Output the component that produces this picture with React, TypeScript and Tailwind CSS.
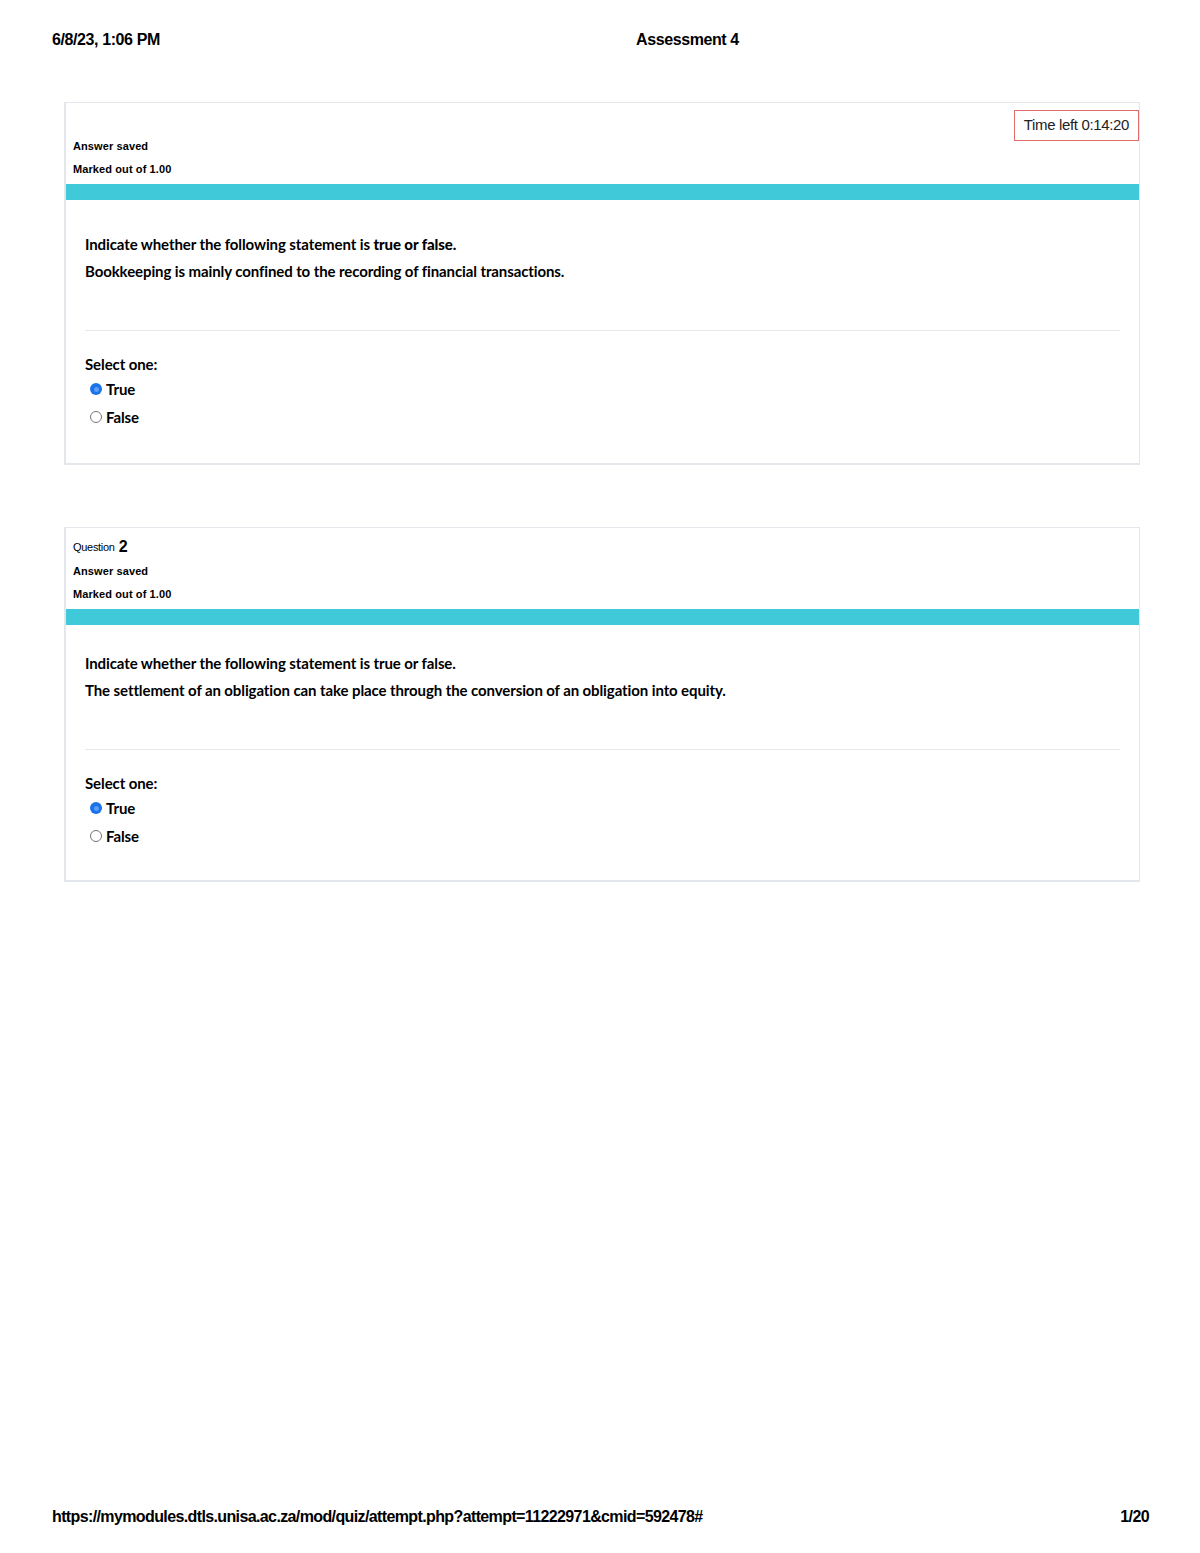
import React from 'react';

interface QuestionCardProps {
    number?: number;
    statement: string;
    boldTail?: boolean;
    firstPad?: string;
    bottomPad?: string;
}

const RadioOption: React.FC<{ label: string; checked: boolean }> = ({ label, checked }) => (
    <label className="flex items-center h-[28px] pl-[5px]">
        {checked ? (
            <span className="w-[12px] h-[12px] rounded-full bg-[#1a73e8] flex items-center justify-center">
                <span className="w-[5px] h-[5px] rounded-full bg-[#5b9cf5]"></span>
            </span>
        ) : (
            <span className="w-[12px] h-[12px] rounded-full border border-[#767676] bg-white"></span>
        )}
        <span className="ml-[4px] font-bold">{label}</span>
    </label>
);

const QuestionCard: React.FC<QuestionCardProps> = ({ number, statement, boldTail, firstPad, bottomPad }) => (
    <div className="relative bg-white border border-[#e3e6ea] border-l-2 border-b-2 text-[#1d2125]">
        <div className="pt-[7px] px-[7px] font-['Liberation_Sans',Arial,sans-serif] font-bold text-[11px] tracking-[0.1px] text-black">
            <div className="h-[24px] flex items-center">
                {number !== undefined && (
                    <>
                        <span className="font-normal text-[11px] tracking-[-0.3px]">Question</span>
                        <span className="ml-[4px] text-[16px]">{number}</span>
                    </>
                )}
            </div>
            <div className="h-[24px] flex items-center">Answer saved</div>
            <div className="h-[22px] flex items-center">Marked out of 1.00</div>
        </div>
        <div className="mt-[4px] h-[16px] bg-[#40c9d9]"></div>
        <div className={`${firstPad ?? 'pt-[25px]'} px-[19px] font-['Lato','Noto_Sans',sans-serif] text-[15px] font-bold tracking-[-0.1px] text-black`}>
            <p className="leading-[27px]">
                Indicate whether the following statement is{' '}
                <span className={boldTail ? 'font-black' : ''}>true or false.</span>
            </p>
            <p className="leading-[27px]">{statement}</p>
            <hr className="mt-[45px] border-t border-[#e6e8eb]" />
            <div className={`pt-[22px] ${bottomPad ?? 'pb-[30px]'}`}>
                <p className="leading-[22px]">Select one:</p>
                <RadioOption label="True" checked={true} />
                <RadioOption label="False" checked={false} />
            </div>
        </div>
    </div>
);

export default function App() {
    return (
        <div className="w-[1200px] min-h-[1553px] bg-white flex flex-col font-['Liberation_Sans',Arial,sans-serif] text-black">
            <div className="pt-[28px] px-[52px] flex items-center text-[16px] font-bold tracking-[-0.4px]">
                <span className="w-[584px]">6/8/23, 1:06 PM</span>
                <span>Assessment 4</span>
            </div>

            <div className="mt-[50px] ml-[64px] w-[1076px] flex flex-col gap-[62px]">
                <div className="relative">
                    <div className="absolute right-[1px] top-[8px] z-10 border border-[#e06c6c] bg-white px-[9px] h-[31px] flex items-center font-['Liberation_Sans',Arial,sans-serif] text-[15px] tracking-[-0.35px] text-[#222]">
                        Time left 0:14:20
                    </div>
                    <QuestionCard
                        statement="Bookkeeping is mainly confined to the recording of financial transactions."
                        boldTail
                        firstPad="pt-[31px]"
                        bottomPad="pb-[32px]"
                    />
                </div>
                <QuestionCard
                    number={2}
                    statement="The settlement of an obligation can take place through the conversion of an obligation into equity."
                />
            </div>

            <div className="mt-auto pb-[24px] px-[52px] flex justify-between text-[16px] font-bold tracking-[-0.62px]">
                <span>https://mymodules.dtls.unisa.ac.za/mod/quiz/attempt.php?attempt=11222971&amp;cmid=592478#</span>
                <span className="mr-[-1px]">1/20</span>
            </div>
        </div>
    );
}
